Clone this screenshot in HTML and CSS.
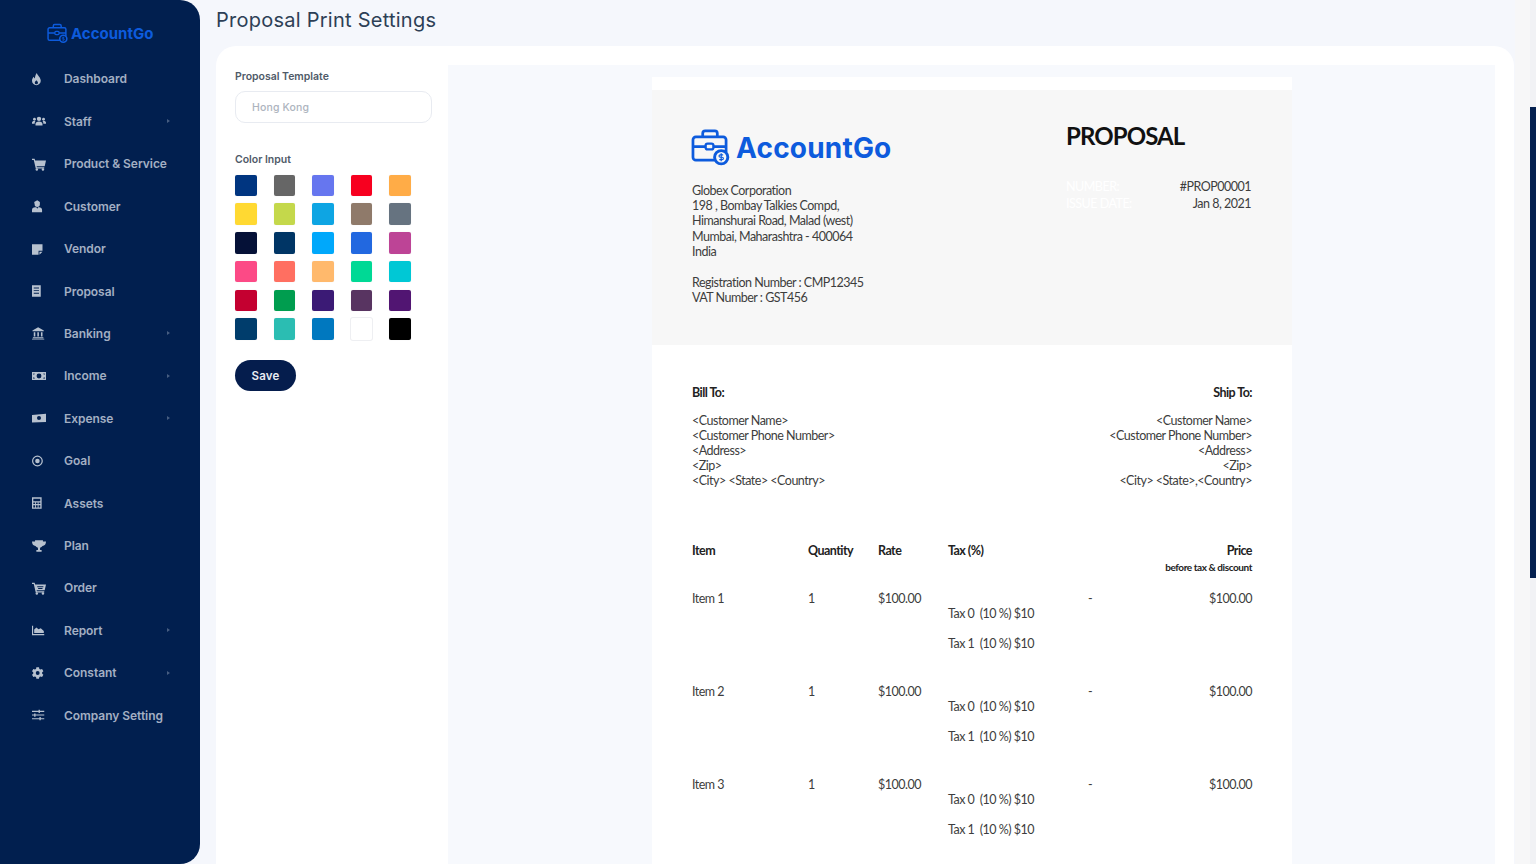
FILE: index.html
```html
<!DOCTYPE html>
<html lang="en">
<head>
<meta charset="utf-8">
<title>Proposal Print Settings</title>
<link rel="stylesheet" href="styles.css">
</head>
<body>
<svg class="defs" width="0" height="0">
<symbol id="brief" viewBox="0 0 40 38">
<path d="M12 8V4.500A2.500 2.500 0 0 1 14.500 2h10A2.500 2.500 0 0 1 27 4.500V8M20 8H5a3 3 0 0 0-3 3v18a3 3 0 0 0 3 3h20M36 24V11a3 3 0 0 0-3-3H20M2 18h13M23 18h13" fill="none" stroke="currentColor" stroke-width="2.800"/>
<rect x="15" y="15" width="8" height="6" rx="2" fill="none" stroke="currentColor" stroke-width="2.400"/>
<circle cx="31" cy="29" r="6.800" fill="none" stroke="currentColor" stroke-width="3"/>
<path d="M33 26.500h-3a1.200 1.200 0 0 0 0 2.500h2a1.200 1.200 0 0 1 0 2.500h-3M31 25v8" fill="none" stroke="currentColor" stroke-width="1.200"/>
</symbol>
</svg>
<div class="app">
<aside class="sidebar">
<div class="brand"><svg class="brand-icon"><use href="#brief"/></svg><span>AccountGo</span></div>
<nav class="nav">
<a class="nav-item"><svg class="ico" viewBox="3 0 16 16"><path d="M8.500 1c.5 2.500 4.500 4.800 4.500 9a5 5 0 0 1-10 0c0-2 1-3.500 2-4.500.2 1 .7 1.700 1.400 2C6.300 5.200 7 2.800 8.500 1zM8 9.500c-1 1-1.800 1.800-1.800 2.800a1.800 1.800 0 0 0 3.600 0c0-1-.8-1.800-1.800-2.800z" fill-rule="evenodd"/></svg><span class="nav-label">Dashboard</span></a>
<a class="nav-item"><svg class="ico" viewBox="0 0 16 16"><circle cx="8" cy="5.500" r="2.500"/><circle cx="2.800" cy="6" r="1.600"/><circle cx="13.200" cy="6" r="1.600"/><path d="M4 13v-1.500C4 9.500 5.500 8.500 8 8.500s4 1 4 3V13zM0 11V9.800C0 8.700 1 8 2.500 8c.6 0 1 .1 1.400.3C3.300 9 3 9.800 3 11zM16 11V9.800c0-1.100-1-1.800-2.500-1.800-.6 0-1 .1-1.400.3.600.7.900 1.500.900 2.700z"/></svg><span class="nav-label">Staff</span><i class="chev"></i></a>
<a class="nav-item"><svg class="ico" viewBox="0 0 16 16"><path d="M0 2h3l.6 2H16l-1.500 6.500H5.300l.3 1.300H14v1.400H4.300L2 3.400H0z"/><circle cx="5.500" cy="14.300" r="1.400"/><circle cx="12.500" cy="14.300" r="1.400"/></svg><span class="nav-label">Product &amp; Service</span></a>
<a class="nav-item"><svg class="ico" viewBox="2 0 16 16"><path d="M4.500 3.500 8 1.500l3 2V6a3 3 0 0 1-6 0z"/><path d="M2 15v-2.500C2 10.500 3.500 9.500 5.500 9.500H7l1 1.500 1-1.500h1c2 0 3.500 1 3.500 3V15z"/></svg><span class="nav-label">Customer</span></a>
<a class="nav-item"><svg class="ico" viewBox="2 0 16 16"><path d="M2 2.500h12v7.500h-4.500V14.500H2zM10.500 14.500V11H14z"/></svg><span class="nav-label">Vendor</span></a>
<a class="nav-item"><svg class="ico" viewBox="2.500 0 16 16"><path fill-rule="evenodd" d="M2.500 1.500h10v13h-10zM4.500 4v1h6V4zM4.500 7v1h6V7zM4.500 10v1h6v-1z"/></svg><span class="nav-label">Proposal</span></a>
<a class="nav-item"><svg class="ico" viewBox="1 0 16 16"><path d="M8 1.500 14.500 5v1h-13V5zM3 7h1.800v5H3zM7.100 7h1.800v5H7.100zM11.200 7H13v5h-1.800zM2 12.800h12V14H2zM1 14.500h14v1H1z"/></svg><span class="nav-label">Banking</span><i class="chev"></i></a>
<a class="nav-item"><svg class="ico" viewBox="0 0 16 16"><path fill-rule="evenodd" d="M0 3.500h16v9H0zM8 5.200a2.800 2.800 0 1 0 0 5.600 2.800 2.800 0 0 0 0-5.600zM1.500 5v1.500A1.500 1.500 0 0 0 3 5zM13 5a1.500 1.500 0 0 0 1.500 1.500V5zM1.500 11h1.500a1.500 1.500 0 0 0-1.500-1.500zM14.500 11V9.500A1.500 1.500 0 0 0 13 11z"/></svg><span class="nav-label">Income</span><i class="chev"></i></a>
<a class="nav-item"><svg class="ico" viewBox="0 0 16 16"><path fill-rule="evenodd" d="M0 4.500 16 3v9.500L0 13zM8 5.800a2.300 2.300 0 1 0 0 4.600 2.300 2.300 0 0 0 0-4.600z"/></svg><span class="nav-label">Expense</span><i class="chev"></i></a>
<a class="nav-item"><svg class="ico" viewBox="1.800 0 16 16"><path fill-rule="evenodd" d="M8 1.800a6.200 6.200 0 1 0 0 12.400A6.200 6.200 0 0 0 8 1.800zM8 3.200a4.800 4.800 0 1 1 0 9.600 4.800 4.800 0 0 1 0-9.600z"/><circle cx="8" cy="8" r="2.600"/></svg><span class="nav-label">Goal</span></a>
<a class="nav-item"><svg class="ico" viewBox="2.500 0 16 16"><path fill-rule="evenodd" d="M2.500 1.500h11v13h-11zM4 3v3h8V3zM4 7.500V9h2V7.500zM7 7.500V9h2V7.500zM10 7.500V9h2V7.500zM4 10.500V13h2v-2.500zM7 10.500V13h2v-2.500zM10 10.500V13h2v-2.500z"/></svg><span class="nav-label">Assets</span></a>
<a class="nav-item"><svg class="ico" viewBox="0 0 16 16"><path d="M3.500 1.500h9v1.300H16C16 6 14.500 7.700 12 8c-.6 1-1.500 1.700-2.800 2v2.500H11v2H5v-2h1.800V10C5.500 9.700 4.600 9 4 8 1.500 7.700 0 6 0 2.800h3.500z"/></svg><span class="nav-label">Plan</span></a>
<a class="nav-item"><svg class="ico" viewBox="0 0 16 16"><path fill-rule="evenodd" d="M0 2h3l.6 2H16l-1.500 6.500H5.300l.3 1.300H14v1.400H4.300L2 3.400H0zM6 6v1h7V6zM7 8v1h5V8z"/><circle cx="5.500" cy="14.300" r="1.400"/><circle cx="12.500" cy="14.300" r="1.400"/></svg><span class="nav-label">Order</span></a>
<a class="nav-item"><svg class="ico" viewBox="1 0 16 16"><path d="M1 3h1.300v9.700H15V14H1zM3.500 11.500V7.500L6 5l2.500 2L11 6l3.500 3v2.500z"/></svg><span class="nav-label">Report</span><i class="chev"></i></a>
<a class="nav-item"><svg class="ico" viewBox="1.500 0 16 16"><path fill-rule="evenodd" d="M6.500 1.500h3l.4 1.800 1.300.7 1.800-.6 1.500 2.600-1.400 1.200v1.600l1.400 1.200-1.500 2.600-1.800-.6-1.300.7-.4 1.800h-3l-.4-1.800-1.300-.7-1.800.6-1.500-2.600 1.400-1.200V7.200L1.500 6l1.500-2.600 1.800.6 1.300-.7zM8 5.800a2.200 2.200 0 1 0 0 4.400 2.200 2.200 0 0 0 0-4.400z"/></svg><span class="nav-label">Constant</span><i class="chev"></i></a>
<a class="nav-item"><svg class="ico" viewBox="1 0 16 16"><path d="M1 3.200h7.500V2H10v1.200h5v1.300h-5v1.200H8.500V4.500H1zM1 7.400h2.500V6.200H5v1.200h10v1.300H5v1.200H3.500V8.700H1zM1 11.600h8.500v-1.200H11v1.200h4v1.300h-4V14H9.500v-1.100H1z"/></svg><span class="nav-label">Company Setting</span></a>
</nav>
</aside>
<main class="main">
<h1 class="page-title">Proposal Print Settings</h1>
<section class="card">
<div class="settings">
<label class="field-label">Proposal Template</label>
<div class="select">Hong Kong</div>
<label class="field-label color-label">Color Input</label>
<div class="swatches">
<span class="sw s1"></span><span class="sw s2"></span><span class="sw s3"></span><span class="sw s4"></span><span class="sw s5"></span>
<span class="sw s6"></span><span class="sw s7"></span><span class="sw s8"></span><span class="sw s9"></span><span class="sw s10"></span>
<span class="sw s11"></span><span class="sw s12"></span><span class="sw s13"></span><span class="sw s14"></span><span class="sw s15"></span>
<span class="sw s16"></span><span class="sw s17"></span><span class="sw s18"></span><span class="sw s19"></span><span class="sw s20"></span>
<span class="sw s21"></span><span class="sw s22"></span><span class="sw s23"></span><span class="sw s24"></span><span class="sw s25"></span>
<span class="sw s26"></span><span class="sw s27"></span><span class="sw s28"></span><span class="sw s29"></span><span class="sw s30"></span>
</div>
<button class="save">Save</button>
</div>
<div class="preview">
<article class="invoice">
<header class="inv-head">
<div class="inv-from">
<div class="inv-logo"><svg class="inv-logo-icon"><use href="#brief"/></svg><span>AccountGo</span></div>
<p class="inv-addr">Globex Corporation<br>198 , Bombay Talkies Compd,<br>Himanshurai Road, Malad (west)<br>Mumbai, Maharashtra - 400064<br>India</p>
<p class="inv-addr inv-reg">Registration Number : CMP12345<br>VAT Number : GST456</p>
</div>
<div class="inv-meta">
<h2 class="inv-title">PROPOSAL</h2>
<div class="meta-row"><span class="meta-key">NUMBER:</span><span>#PROP00001</span></div>
<div class="meta-row"><span class="meta-key">ISSUE DATE:</span><span>Jan 8, 2021</span></div>
</div>
</header>
<div class="inv-body">
<div class="parties">
<div class="party"><b class="party-title">Bill To:</b><p class="party-lines">&lt;Customer Name&gt;<br>&lt;Customer Phone Number&gt;<br>&lt;Address&gt;<br>&lt;Zip&gt;<br>&lt;City&gt; &lt;State&gt; &lt;Country&gt;</p></div>
<div class="party party-right"><b class="party-title">Ship To:</b><p class="party-lines">&lt;Customer Name&gt;<br>&lt;Customer Phone Number&gt;<br>&lt;Address&gt;<br>&lt;Zip&gt;<br>&lt;City&gt; &lt;State&gt;,&lt;Country&gt;</p></div>
</div>
<div class="tbl tbl-head">
<b>Item</b><b>Quantity</b><b>Rate</b><b>Tax (%)</b><b class="c-disc"></b><div class="c-price"><b>Price</b><small>before tax &amp; discount</small></div>
</div>
<div class="tbl tbl-row"><span>Item 1</span><span>1</span><span>$100.00</span><div class="taxes"><span>Tax 0 &nbsp;(10 %) $10</span><span>Tax 1 &nbsp;(10 %) $10</span></div><span class="c-disc">-</span><span class="c-price">$100.00</span></div>
<div class="tbl tbl-row"><span>Item 2</span><span>1</span><span>$100.00</span><div class="taxes"><span>Tax 0 &nbsp;(10 %) $10</span><span>Tax 1 &nbsp;(10 %) $10</span></div><span class="c-disc">-</span><span class="c-price">$100.00</span></div>
<div class="tbl tbl-row"><span>Item 3</span><span>1</span><span>$100.00</span><div class="taxes"><span>Tax 0 &nbsp;(10 %) $10</span><span>Tax 1 &nbsp;(10 %) $10</span></div><span class="c-disc">-</span><span class="c-price">$100.00</span></div>
</div>
</article>
</div>
</section>
</main>
</div>
<div class="scrollbar"><div class="thumb"></div></div>
</body>
</html>
```
FILE: styles.css
```css
* { box-sizing: border-box; }
html, body { margin: 0; height: 864px; overflow: hidden; }
body { background: #f5f7fc; font-family: Inter, "Liberation Sans", sans-serif; }
.defs { position: absolute; }
.app { display: flex; height: 864px; }

.sidebar { width: 200px; flex: none; background: #011f4f; border-radius: 0 20px 20px 0; }
.brand { display: flex; align-items: center; height: 66px; padding-left: 47px; color: #0d5bdd; font-size: 15px; font-weight: 700; gap: 3px; }
.brand-icon { width: 21px; height: 21px; }
.nav { display: flex; flex-direction: column; margin-top: -8.300px; }
.nav-item { display: flex; align-items: center; height: 42.430px; padding-left: 32px; color: #a3afc3; font-size: 12px; font-weight: 600; letter-spacing: -.05px; }
.ico { width: 14px; height: 14px; fill: #b7c1cf; flex: none; margin-right: 18px; }
.nav-label { flex: 1; }
.chev { width: 0; height: 0; margin-right: 30px; border-left: 3px solid #465d81; border-top: 2.500px solid transparent; border-bottom: 2.500px solid transparent; }

.main { flex: 1; padding: 0 22px 0 16px; min-width: 0; }
.page-title { margin: 0; height: 46px; padding-top: 8px; font-size: 20px; line-height: 25px; font-weight: 400; color: #2d3f56; letter-spacing: .25px; }
.card { display: flex; background: #fff; border-radius: 20px 20px 0 0; height: 818px; padding: 19px 19px 0 0; }
.settings { width: 232px; flex: none; padding: 5px 0 0 19px; display: flex; flex-direction: column; align-items: flex-start; }
.field-label { font-size: 10.500px; line-height: 14px; font-weight: 600; color: #4f5a68; letter-spacing: -.02px; }
.select { margin-top: 7px; width: 197px; height: 32px; border: 1px solid #e8ebf1; border-radius: 10px; padding-left: 16px; font-size: 10.500px; line-height: 32px; font-weight: 500; color: #adb4be; letter-spacing: .15px; }
.color-label { margin-top: 30px; }
.swatches { margin-top: 7.500px; display: grid; grid-template-columns: repeat(5, 21.500px); column-gap: 17px; row-gap: 7.300px; }
.sw { height: 21.500px; border-radius: 2px; box-shadow: 0 0 1px rgba(0,0,0,.12); }
.s1 { background: #003580; } .s2 { background: #666666; } .s3 { background: #6676ef; } .s4 { background: #f7001f; } .s5 { background: #ffac47; }
.s6 { background: #ffd932; } .s7 { background: #c4d84b; } .s8 { background: #0ea5e3; } .s9 { background: #8f7a6a; } .s10 { background: #667380; }
.s11 { background: #051137; } .s12 { background: #003565; } .s13 { background: #00a8fb; } .s14 { background: #2268e0; } .s15 { background: #bd4496; }
.s16 { background: #fc4a86; } .s17 { background: #ff6f61; } .s18 { background: #ffb96c; } .s19 { background: #00d995; } .s20 { background: #00c8d5; }
.s21 { background: #c40030; } .s22 { background: #009d4f; } .s23 { background: #3b1a75; } .s24 { background: #583461; } .s25 { background: #511572; }
.s26 { background: #003d6c; } .s27 { background: #2bbdb2; } .s28 { background: #0078bf; } .s29 { background: #ffffff; box-shadow: 0 0 0 1px #eeeff2; } .s30 { background: #000000; }
.save { margin-top: 20.500px; width: 61px; height: 31px; border: 0; border-radius: 16px; background: #051d4d; color: #e8ecf3; font: 600 11.500px Inter, sans-serif; letter-spacing: .2px; }

.preview { flex: 1; background: #f7f9fd; padding: 12px 203px 0 204px; min-width: 0; }
.invoice { background: #fff; height: 800px; padding-top: 13px; font-family: Lato, "Liberation Sans", sans-serif; font-size: 12.500px; line-height: 15.200px; color: #3d3d3d; letter-spacing: -.5px; }
.inv-head { display: flex; height: 255px; background: #f7f7f7; padding: 39px 41px 0 40px; }
.inv-from { width: 374px; flex: none; }
.inv-logo { display: flex; align-items: center; gap: 6px; height: 37px; margin-left: -1px; color: #0d5bdd; font: 700 28px Inter, sans-serif; letter-spacing: .2px; }
.inv-logo-icon { width: 39px; height: 37px; }
.inv-addr { margin: 17px 0 0; }
.inv-reg { margin-top: 16px; }
.inv-meta { flex: 1; }
.inv-title { margin: -11px 0 0; font-size: 24px; line-height: 36px; font-weight: 700; color: #111; letter-spacing: -.9px; }
.meta-row { display: flex; justify-content: space-between; line-height: 17px; }
.inv-title + .meta-row { margin-top: 24px; }
.meta-key { color: #fff; }

.inv-body { padding: 40px 40px 0 40px; }
.parties { display: flex; justify-content: space-between; }
.party-title { display: block; font-weight: 700; color: #222; letter-spacing: -.55px; }
.party-lines { margin: 13px 0 0; line-height: 15px; }
.party-right { text-align: right; }
.tbl { display: grid; grid-template-columns: 116px 70px 70px 140px 1fr 100px; }
.tbl-head { margin-top: 55px; color: #222; height: 48px; }
.tbl-head b { font-weight: 700; letter-spacing: -.55px; }
.c-price { text-align: right; }
.c-price small { display: block; margin-top: 2px; font-size: 10px; font-weight: 700; letter-spacing: -.42px; white-space: nowrap; }
.tbl-row { height: 92.900px; }
.taxes { display: flex; flex-direction: column; padding-top: 15px; gap: 15px; }

.scrollbar { position: fixed; top: 0; right: 0; bottom: 0; width: 21px; background: linear-gradient(90deg, #f7f7f8 0 15px, #f1f2f5 15px); }
.thumb { position: absolute; top: 107px; right: 0; width: 6px; height: 471px; background: #04204f; }
```
